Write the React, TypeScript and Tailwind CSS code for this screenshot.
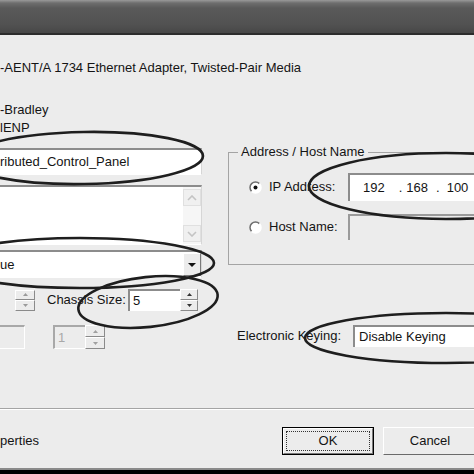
import React from "react";

function Tri({ up, color = "#111", w = 7 }: { up?: boolean; color?: string; w?: number }) {
  const h = Math.ceil(w / 2);
  return (
    <svg width={w} height={h} viewBox={`0 0 ${w} ${h}`} className="shrink-0">
      {up ? (
        <polygon points={`0,${h} ${w},${h} ${w / 2},0`} fill={color} />
      ) : (
        <polygon points={`0,0 ${w},0 ${w / 2},${h}`} fill={color} />
      )}
    </svg>
  );
}

function Spin({ color = "#444" }: { color?: string }) {
  return (
    <div className="flex flex-col w-full h-full">
      <div className="flex-1 flex items-center justify-center bg-[#ececec] border border-t-white border-l-white border-b-[#8a8a8a] border-r-[#8a8a8a]">
        <Tri up color={color} w={5} />
      </div>
      <div className="flex-1 flex items-center justify-center bg-[#ececec] border border-t-white border-l-white border-b-[#8a8a8a] border-r-[#8a8a8a]">
        <Tri color={color} w={5} />
      </div>
    </div>
  );
}

function Radio({ checked }: { checked?: boolean }) {
  return (
    <svg width="13" height="13" viewBox="0 0 13 13" className="shrink-0">
      <circle cx="6.5" cy="6.5" r="5.5" fill="#fff" />
      <path d="M2.61 10.39 A5.5 5.5 0 0 1 10.39 2.61" stroke="#6e6e6e" strokeWidth="1.5" fill="none" />
      <path d="M10.39 2.61 A5.5 5.5 0 0 1 2.61 10.39" stroke="#ffffff" strokeWidth="1.5" fill="none" />
      {checked && <circle cx="6.5" cy="6.5" r="2" fill="#111" />}
    </svg>
  );
}

function Chevron({ up }: { up?: boolean }) {
  return (
    <svg width="10" height="6" viewBox="0 0 10 6" fill="none" stroke="#c4c4c4" strokeWidth="1.6">
      {up ? <polyline points="1,5 5,1 9,5" /> : <polyline points="1,1 5,5 9,1" />}
    </svg>
  );
}

export default function App() {
  return (
    <div className="relative w-[474px] h-[474px] overflow-hidden flex flex-col bg-[#ececec] text-[#141414] text-[13px] leading-4 font-['Liberation_Sans',Arial,sans-serif]">
      {/* title bar */}
      <div className="h-[35px] shrink-0 border-b-2 border-[#2c2c2c] bg-[linear-gradient(to_bottom,#9a9a9a_0px,#6e6e6e_3px,#5a5a5a_8px,#525252_24px,#474747_33px)]" />

      {/* body */}
      <div className="flex-1 flex flex-col">
        <div className="mt-[25px] h-4 whitespace-nowrap">-AENT/A 1734 Ethernet Adapter, Twisted-Pair Media</div>

        <div className="mt-[26px] flex items-start">
          {/* left column */}
          <div className="w-[202px] shrink-0 flex flex-col">
            <div className="h-4 whitespace-nowrap">-Bradley</div>
            <div className="mt-[2px] h-4 whitespace-nowrap">lENP</div>

            <div className="mt-[12px] h-[27px] flex items-center bg-white border-t-2 border-t-[#8c8c8c] border-b border-b-white border-r border-r-[#d6d6d6] whitespace-nowrap">
              ributed_Control_Panel
            </div>

            <div className="mt-[10px] h-[60px] flex bg-white border-t-2 border-t-[#8c8c8c] border-b border-b-white border-r border-r-[#d6d6d6]">
              <div className="flex-1" />
              <div className="w-[18px] flex flex-col justify-between bg-[#f6f6f6] py-[2px]">
                <div className="h-[17px] flex items-center justify-center bg-[#f0f0f0] border border-[#e0e0e0]">
                  <Chevron up />
                </div>
                <div className="h-[17px] flex items-center justify-center bg-[#f0f0f0] border border-[#e0e0e0]">
                  <Chevron />
                </div>
              </div>
            </div>

            <div className="mt-[5px] h-[28px] flex items-stretch bg-white border-t-2 border-t-[#8c8c8c] border-b border-b-white border-r border-r-[#d6d6d6]">
              <div className="flex-1 flex items-center whitespace-nowrap">ue</div>
              <div className="w-[18px] my-[1px] flex items-center justify-center bg-[#ececec] border border-t-white border-l-white border-b-[#7a7a7a] border-r-[#7a7a7a]">
                <Tri color="#111" w={8} />
              </div>
            </div>

            <div className="mt-[11px] h-[22px] flex items-center">
              <div className="ml-[15px] w-[20px] h-[21px]">
                <Spin color="#9a9a9a" />
              </div>
              <div className="ml-[12px] w-[81px] whitespace-nowrap">Chassis Size:</div>
              <div className="w-[52px] h-[22px] flex items-center pl-[3px] bg-white border-t-2 border-l-2 border-t-[#8c8c8c] border-l-[#8c8c8c]">
                5
              </div>
              <div className="w-[18px] h-[22px]">
                <Spin color="#333" />
              </div>
            </div>

            <div className="mt-[14px] h-[24px] flex items-center">
              <div className="w-[25px] h-[24px] bg-[#ececec] border-t-2 border-r border-b border-t-[#a8a8a8] border-r-white border-b-white" />
              <div className="ml-[28px] w-[32px] h-[24px] flex items-center pl-[3px] text-[#a8a8a8] bg-[#ececec] border-t-2 border-l-2 border-b border-t-[#a8a8a8] border-l-[#a8a8a8] border-b-white">
                1
              </div>
              <div className="w-[20px] h-[24px]">
                <Spin color="#a0a0a0" />
              </div>
            </div>
          </div>

          {/* right column */}
          <div className="ml-[26px] flex flex-col">
            <fieldset className="mt-[42px] w-[260px] border border-[#a4a4a4]">
              <legend className="ml-[9px] px-[3px] leading-4 whitespace-nowrap">Address / Host Name</legend>
              <div className="pt-[13px] pb-[24px] pl-[20px] flex flex-col">
                <div className="h-[28px] flex items-center">
                  <Radio checked />
                  <div className="ml-[7px] w-[79px] whitespace-nowrap">IP Address:</div>
                  <div className="w-[160px] h-[28px] flex items-center bg-white border-t-2 border-l-2 border-t-[#8c8c8c] border-l-[#8c8c8c] whitespace-nowrap">
                    <span className="ml-[13px]">192</span>
                    <span className="ml-[14px]">.</span>
                    <span className="ml-[4px]">168</span>
                    <span className="ml-[8px]">.</span>
                    <span className="ml-[7px]">100</span>
                  </div>
                </div>
                <div className="mt-[13px] h-[26px] flex items-center">
                  <Radio />
                  <div className="ml-[7px] w-[79px] whitespace-nowrap">Host Name:</div>
                  <div className="w-[160px] h-[26px] bg-[#ececec] border-t-2 border-l-2 border-t-[#9a9a9a] border-l-[#9a9a9a]" />
                </div>
              </div>
            </fieldset>

            <div className="mt-[60px] h-[22px] flex items-center">
              <div className="pl-[9px] w-[125px] whitespace-nowrap">Electronic Keying:</div>
              <div className="w-[140px] h-[22px] flex items-center pl-[4px] bg-white border-t-2 border-l-2 border-t-[#8c8c8c] border-l-[#8c8c8c] whitespace-nowrap">
                Disable Keying
              </div>
            </div>
          </div>
        </div>

        {/* separator */}
        <div className="mt-[59px] h-px bg-[#a4a4a4]" />
        <div className="h-px bg-white" />

        {/* buttons */}
        <div className="mt-[17px] h-[28px] flex items-center">
          <div className="w-[282px] shrink-0 whitespace-nowrap">perties</div>
          <div className="w-[92px] h-[28px] shrink-0 border border-black">
            <div className="h-full p-[2px] bg-[#ececec] border border-t-white border-l-white border-b-[#7a7a7a] border-r-[#7a7a7a]">
              <div className="h-full flex items-center justify-center border border-dotted border-[#333]">OK</div>
            </div>
          </div>
          <div className="ml-[9px] w-[94px] h-[28px] shrink-0 flex items-center justify-center bg-[#ececec] border border-t-white border-l-white border-b-[#6a6a6a] border-r-[#6a6a6a]">
            Cancel
          </div>
        </div>
      </div>

      {/* bottom edge */}
      <div className="h-[2px] shrink-0 bg-[#8a8a8a]" />
      <div className="h-[4px] shrink-0 bg-black" />

      {/* hand-drawn ellipses */}
      <svg
        className="absolute inset-0 pointer-events-none"
        width="474"
        height="474"
        viewBox="0 0 474 474"
        fill="none"
        stroke="#1e1e1e"
        strokeWidth="2.6"
      >
        <ellipse cx="84" cy="158" rx="119" ry="26" transform="rotate(-1 84 158)" />
        <ellipse cx="80" cy="263" rx="134" ry="25" />
        <ellipse cx="148" cy="302" rx="70" ry="25" transform="rotate(-6 148 302)" />
        <ellipse cx="446" cy="186" rx="137" ry="33" />
        <ellipse cx="446" cy="338" rx="141" ry="25" />
      </svg>
    </div>
  );
}
